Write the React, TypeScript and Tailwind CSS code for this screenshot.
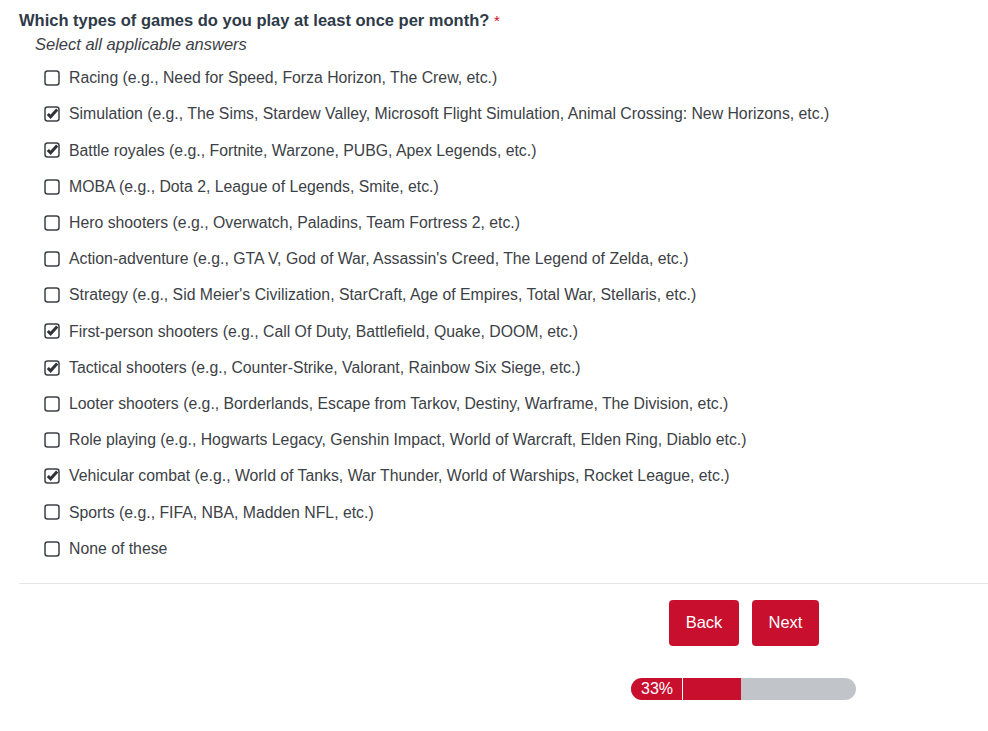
import React from "react";

const options: [string, boolean][] = [
  ["Racing (e.g., Need for Speed, Forza Horizon, The Crew, etc.)", false],
  ["Simulation (e.g., The Sims, Stardew Valley, Microsoft Flight Simulation, Animal Crossing: New Horizons, etc.)", true],
  ["Battle royales (e.g., Fortnite, Warzone, PUBG, Apex Legends, etc.)", true],
  ["MOBA (e.g., Dota 2, League of Legends, Smite, etc.)", false],
  ["Hero shooters (e.g., Overwatch, Paladins, Team Fortress 2, etc.)", false],
  ["Action-adventure (e.g., GTA V, God of War, Assassin's Creed, The Legend of Zelda, etc.)", false],
  ["Strategy (e.g., Sid Meier's Civilization, StarCraft, Age of Empires, Total War, Stellaris, etc.)", false],
  ["First-person shooters (e.g., Call Of Duty, Battlefield, Quake, DOOM, etc.)", true],
  ["Tactical shooters (e.g., Counter-Strike, Valorant, Rainbow Six Siege, etc.)", true],
  ["Looter shooters (e.g., Borderlands, Escape from Tarkov, Destiny, Warframe, The Division, etc.)", false],
  ["Role playing (e.g., Hogwarts Legacy, Genshin Impact, World of Warcraft, Elden Ring, Diablo etc.)", false],
  ["Vehicular combat (e.g., World of Tanks, War Thunder, World of Warships, Rocket League, etc.)", true],
  ["Sports (e.g., FIFA, NBA, Madden NFL, etc.)", false],
  ["None of these", false],
];

function Box({ checked }: { checked: boolean }) {
  return (
    <svg width="16" height="16" viewBox="0 0 16 16" className="shrink-0">
      <rect x="1" y="1" width="14" height="14" rx="2.5" fill="white" stroke="#3c4046" strokeWidth="1.5" />
      {checked && (
        <path d="M3.8 8 L6.6 10.8 L13.2 3.6" fill="none" stroke="#2f3338" strokeWidth="3" strokeLinecap="butt" strokeLinejoin="miter" />
      )}
    </svg>
  );
}

export default function App() {
  return (
    <div className="w-[988px] h-[731px] bg-white pl-[19px] pt-[10px]" style={{ fontFamily: '"Liberation Sans", Arial, sans-serif' }}>
      <div className="text-[16.5px] font-bold text-[#2e3a48] leading-[20px]">
        Which types of games do you play at least once per month? <span className="text-[#c8102e] font-normal text-[15px]">*</span>
      </div>
      <div className="pl-[16px] italic text-[16.5px] text-[#3c4146] leading-[20px] mt-[3px]">Select all applicable answers</div>
      <div className="mt-[6px] pl-[25px] flex flex-col">
        {options.map(([t, c], i) => (
          <div key={i} className="flex items-center gap-[9px] h-[36.2px] text-[15.8px] text-[#3c4146]">
            <Box checked={c} />
            <span>{t}</span>
          </div>
        ))}
      </div>
      <div className="mt-[16px] border-t border-[#e6e6e6]" />
      <div className="flex gap-[13px] pl-[650px] mt-[16px]">
        <button className="w-[70px] h-[46px] rounded bg-[#c8102e] text-white text-[16.5px]">Back</button>
        <button className="w-[67px] h-[46px] rounded bg-[#c8102e] text-white text-[16.5px]">Next</button>
      </div>
      <div className="ml-[612px] mt-[32px] w-[225px] h-[22px] rounded-full bg-[#c1c5ca] overflow-hidden flex">
        <div className="w-[52px] h-full bg-[#c8102e] text-white text-[16px] flex items-center pl-[10px] border-r border-white">33%</div>
        <div className="w-[58px] h-full bg-[#c8102e]" />
      </div>
    </div>
  );
}
